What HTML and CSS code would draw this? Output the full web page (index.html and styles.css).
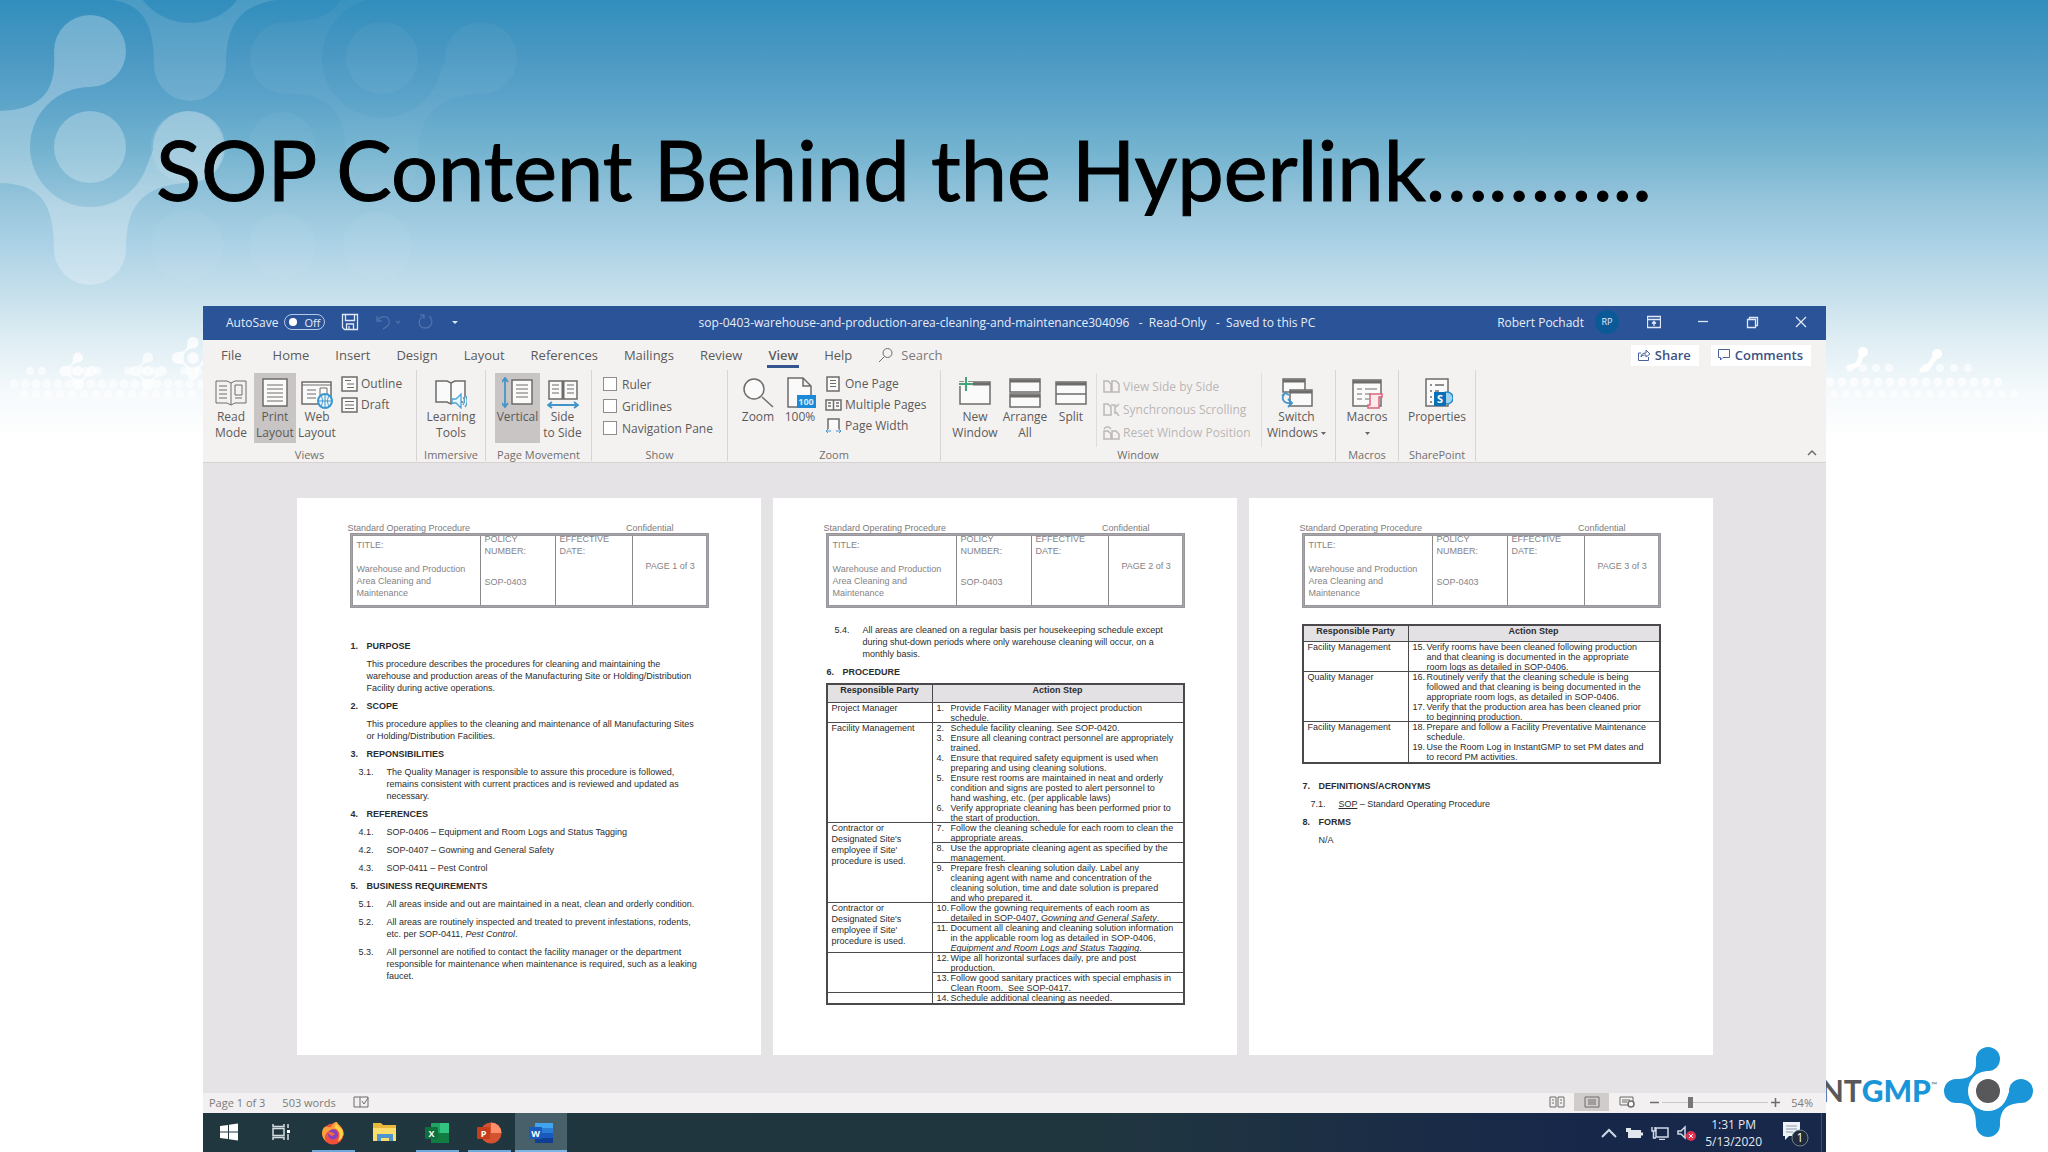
FILE: index.html
```html
<!DOCTYPE html>
<html lang="en">
<head>
<meta charset="utf-8">
<title>SOP Content Behind the Hyperlink</title>
<link rel="stylesheet" href="styles.css">
</head>
<body>
<svg width="0" height="0" class="defs" aria-hidden="true">
  <defs>
    <g id="arms">
      <circle cx="0" cy="-32" r="12"/><circle cx="-32" cy="0" r="12"/><circle cx="0" cy="34" r="12"/><circle cx="33" cy="0" r="12"/>
      <path d="M-12-31C-11-17-18-12-31-12L-31 12C-17 12-12 18-12 34L12 34C12 20 17 13 32 12L21 1L19 6L0 20L-20 0L-14-14L0-20L9-24Z"/>
    </g>
    <mask id="ring" maskUnits="userSpaceOnUse" x="-50" y="-50" width="100" height="100">
      <g fill="#fff"><use href="#arms"/></g>
      <circle r="20" fill="#000"/><circle r="12" fill="#fff"/>
    </mask>
    <g id="molecule"><rect x="-50" y="-50" width="100" height="100" fill="#fff" mask="url(#ring)"/></g>
  </defs>
</svg>
<main class="slide">
  <svg class="backdrop" viewBox="0 0 600 440" width="600" height="440" aria-hidden="true">
    <use href="#molecule" transform="translate(90 147) scale(3)" opacity=".27"/>
    <use href="#molecule" transform="translate(190 -37) scale(3)" opacity=".12"/>
    <circle cx="187" cy="147" r="36" fill="#fff" opacity=".1"/>
    <g fill="#fff" opacity=".04">
      <use href="#molecule" transform="translate(382 58) scale(3)"/>
      <circle cx="282" cy="145" r="33"/><circle cx="282" cy="246" r="33"/><circle cx="377" cy="246" r="34"/><circle cx="187" cy="246" r="36"/>
    </g>
    <g stroke="#fff" fill="none" stroke-linecap="round" opacity=".6">
      <path d="M30 371H200" stroke-width="8" stroke-dasharray="0 12 0 30 0 14"/>
      <path d="M14 384H203" stroke-width="9" stroke-dasharray="0 11"/>
      <path d="M24 394H203" stroke-width="8" stroke-dasharray="0 12"/>
    </g>
    <use href="#molecule" transform="translate(78 371) scale(.42)" opacity=".8"/>
    <use href="#molecule" transform="translate(148 371) scale(.42)" opacity=".7"/>
    <use href="#molecule" transform="translate(193 358) scale(.48)" opacity=".8"/>
  </svg>
  <svg class="backdrop backdrop-right" viewBox="0 0 222 80" width="222" height="80" aria-hidden="true">
    <g stroke="#fff" fill="none" stroke-linecap="round" opacity=".7">
      <path d="M24 28H72" stroke-width="8" stroke-dasharray="0 13"/>
      <path d="M100 28H150" stroke-width="8" stroke-dasharray="0 14"/>
      <path d="M4 42H180" stroke-width="9" stroke-dasharray="0 12"/>
      <path d="M8 54H200" stroke-width="7" stroke-dasharray="0 12"/>
    </g>
    <path d="M37 12L32 24L24 28M111 14L103 26L96 30" stroke="#fff" stroke-width="5" fill="none" stroke-linecap="round"/>
    <circle cx="37" cy="12" r="5" fill="#fff"/><circle cx="111" cy="14" r="5" fill="#fff"/>
  </svg>

  <h1 class="title">SOP Content Behind the Hyperlink………..</h1>

  <div class="brand">
    <span class="brand-name">NT<b>GMP</b><sup>™</sup></span>
    <svg viewBox="-46 -46 92 92" width="92" height="92" aria-hidden="true">
      <use href="#arms" fill="#1a96d8"/><circle r="20" fill="#fff"/><circle r="12" fill="#58585a"/>
    </svg>
  </div>

  <section class="app">
    <header class="titlebar">
      <div class="quick">
        <label class="autosave">AutoSave <span class="pill"><input type="checkbox">Off</span></label>
        <button aria-label="Save"><svg viewBox="0 0 18 18" width="18" height="18"><path d="M1.500 1.500H16.500V16.500H3.500L1.500 14.500ZM4.500 1.500V7.500H13.500V1.500M5.500 16.500V11H12.500V16.500M8 13V16" class="w"/></svg></button>
        <button class="dim" aria-label="Undo"><svg viewBox="0 0 26 18" width="26" height="18"><path d="M2 3V8H7M2 8C5 3 12 2 14 7S11 14 8 16M21 8L23 10L25 8" class="w"/></svg></button>
        <button class="dim" aria-label="Redo"><svg viewBox="0 0 18 18" width="18" height="18"><path d="M3 2H7V6M7 3C0 6 1 15 8 15S17 7 12 3" class="w"/></svg></button>
        <button aria-label="Customize"><svg viewBox="0 0 8 8" width="8" height="8"><path d="M1 3H7L4 6Z" fill="#dfe8f7"/></svg></button>
      </div>
      <div class="doc-name">sop-0403-warehouse-and-production-area-cleaning-and-maintenance304096&nbsp;&nbsp; -&nbsp; Read-Only&nbsp;&nbsp; -&nbsp; Saved to this PC</div>
      <div class="account">
        <span>Robert Pochadt</span><span class="avatar">RP</span>
        <button aria-label="Ribbon display"><svg viewBox="0 0 14 14" width="14" height="14"><path d="M.5 1.500H13.500V12.500H.5ZM.5 4.500H13.500M7 11V6.500M5 8.500L7 6.500L9 8.500" class="w"/></svg></button>
        <button aria-label="Minimize"><svg viewBox="0 0 14 14" width="14" height="14"><path d="M2 6.500H12" class="w"/></svg></button>
        <button aria-label="Restore"><svg viewBox="0 0 14 14" width="14" height="14"><path d="M2.500 4.500H10.500V12.500H2.500ZM4.500 4.500V2.500H12.500V10.500H10.500" class="w"/></svg></button>
        <button aria-label="Close"><svg viewBox="0 0 14 14" width="14" height="14"><path d="M2 2L12 12M12 2L2 12" class="w"/></svg></button>
      </div>
    </header>

    <nav class="tabs">
      <button class="file">File</button><button>Home</button><button>Insert</button><button>Design</button><button>Layout</button><button>References</button><button>Mailings</button><button>Review</button><button class="active">View</button><button>Help</button>
      <label class="search"><svg viewBox="0 0 16 16" width="16" height="16"><circle cx="9.500" cy="6" r="4.500" class="k"/><path d="M6.500 9.500L1 15" class="k"/></svg><input type="text" placeholder="Search" aria-label="Search"></label>
      <div class="share">
        <button><svg viewBox="0 0 14 14" width="14" height="14"><path d="M4 5H1.500V12.500H11.500V9M4 9C4 6 6 5 9 5V2L13 6L9 9V7C7 7 5 7 4 9Z" class="n"/></svg>Share</button>
        <button><svg viewBox="0 0 14 14" width="14" height="14"><path d="M1.500 1.500H12.500V9.500H6L3.500 12V9.500H1.500Z" class="n"/></svg>Comments</button>
      </div>
    </nav>

    <div class="ribbon">
      <div class="group views">
        <div class="tools">
          <button class="tool w46"><svg viewBox="0 0 32 32" width="32" height="32"><path d="M1 4H12L16 6L20 4H31V26H20L16 28L12 26H1ZM16 6V28M4 9H12M4 13H12M4 17H12M4 21H12M20 8H27V18H20ZM20 21H27" class="k"/></svg>Read<br>Mode</button>
          <button class="tool w42 on"><svg viewBox="0 0 32 32" width="32" height="32"><path d="M4 2H28V29H4Z" class="kf"/><path d="M8 8H24M8 12H24M8 16H24M8 20H24M8 24H24" class="k"/></svg>Print<br>Layout</button>
          <button class="tool w42"><svg viewBox="0 0 32 32" width="32" height="32"><path d="M1 5H30V27H1Z" class="kf"/><path d="M1 8H30M6 13H15M6 17H15M6 21H15M19 11H26V18H19Z" class="k"/><circle cx="24" cy="24" r="7" fill="#e8f5fc" stroke="#3a97cf" stroke-width="2"/><path d="M17 24H31M24 17V31M20 19C22 22 22 26 20 29M28 19C26 22 26 26 28 29" class="b"/></svg>Web<br>Layout</button>
          <div class="stack views-list">
            <button><svg viewBox="0 0 17 16" width="17" height="16"><path d="M1 1H16V15H1Z" class="kf"/><path d="M4 4.500H10M6 8H13M6 11.500H13" class="k"/></svg>Outline</button>
            <button><svg viewBox="0 0 17 16" width="17" height="16"><path d="M1 1H16V15H1Z" class="kf"/><path d="M4 4.500H13M4 8H13M4 11.500H13" class="k"/></svg>Draft</button>
          </div>
        </div>
        <div class="group-name">Views</div>
      </div>
      <div class="group immersive">
        <div class="tools center">
          <button class="tool w50"><svg viewBox="0 0 32 32" width="32" height="32"><path d="M1 4H12L16 6L20 4H30V25H19L16 27L12 25H1ZM16 6V26" class="kf"/><path d="M17 22H21L26 17V31L21 26H17ZM28 20C30 23 30 25 28 28M30 18C33 22 33 26 30 30" class="bf"/></svg>Learning<br>Tools</button>
        </div>
        <div class="group-name">Immersive</div>
      </div>
      <div class="group movement">
        <div class="tools">
          <button class="tool single w45 on"><svg viewBox="0 0 32 32" width="32" height="32"><path d="M3 1V30M0 5L3 1L6 5M0 26L3 30L6 26" class="b2"/><path d="M10 3H30V27H10Z" class="kf"/><path d="M14 8H26M14 12H26M14 16H26M14 20H26" class="k"/></svg>Vertical</button>
          <button class="tool w45"><svg viewBox="0 0 32 32" width="32" height="32"><path d="M2 4H30V22H2Z" class="kf"/><path d="M16 4V22" class="k3"/><path d="M5 8H12M5 12H12M5 16H12M20 8H27M20 12H27M20 16H27" class="k"/><path d="M1 28H31M5 25L1 28L5 31M27 25L31 28L27 31" class="b2"/></svg>Side<br>to Side</button>
        </div>
        <div class="group-name">Page Movement</div>
      </div>
      <div class="group show">
        <div class="tools checks">
          <label><input type="checkbox">Ruler</label><label><input type="checkbox">Gridlines</label><label><input type="checkbox">Navigation Pane</label>
        </div>
        <div class="group-name">Show</div>
      </div>
      <div class="group zoom">
        <div class="tools">
          <button class="tool single w42"><svg viewBox="0 0 32 32" width="32" height="32"><circle cx="12" cy="12" r="10" class="kf"/><path d="M20 20L31 30" class="k2"/></svg>Zoom</button>
          <button class="tool single w42"><svg viewBox="0 0 32 32" width="32" height="32"><path d="M4 1H19L27 9V30H4ZM19 1V9H27" class="kf"/><rect x="13" y="18" width="19" height="13" fill="#1c8ad6"/><text x="22" y="28" text-anchor="middle" class="hundred">100</text></svg>100%</button>
          <div class="stack zoom-list">
            <button><svg viewBox="0 0 17 16" width="17" height="16"><path d="M2 1H14V15H2Z" class="kf"/><path d="M5 4.500H11M5 7.500H11M5 10.500H11" class="k"/></svg>One Page</button>
            <button><svg viewBox="0 0 17 16" width="17" height="16"><path d="M1 3H16V13H1Z" class="kf"/><path d="M8.500 3V13M3 6H6M3 9H6M11 6H14M11 9H14" class="k2"/></svg>Multiple Pages</button>
            <button><svg viewBox="0 0 17 16" width="17" height="16"><path d="M3 11V1H14V11" class="kf"/><path d="M1 13H6M11 13H16M3 11L1 13L3 15M14 11L16 13L14 15" class="b"/></svg>Page Width</button>
          </div>
        </div>
        <div class="group-name">Zoom</div>
      </div>
      <div class="group window">
        <div class="tools">
          <button class="tool w50"><svg viewBox="0 0 32 32" width="32" height="32"><path d="M1 5H31V27H1Z" class="kf"/><path d="M10 7H31" class="k3"/><path d="M7 0V14M0 7H14" stroke="#f4f2f1" stroke-width="4"/><path d="M7 0V14M0 7H14" stroke="#45a479" stroke-width="2"/></svg>New<br>Window</button>
          <button class="tool w50"><svg viewBox="0 0 32 32" width="32" height="32"><path d="M1 2H31V15H1ZM1 17H31V30H1Z" class="kf"/><path d="M1 4H31M1 19H31" class="k3"/></svg>Arrange<br>All</button>
          <button class="tool single w42"><svg viewBox="0 0 32 32" width="32" height="32"><path d="M1 5H31V27H1ZM1 17H31" class="kf"/><path d="M1 7H31" class="k3"/></svg>Split</button>
          <div class="stack disabled">
            <button disabled><svg viewBox="0 0 17 16" width="17" height="16"><path d="M1 2H5L8 5V13H1ZM9 2H13L16 5V13H9Z" class="g"/></svg>View Side by Side</button>
            <button disabled><svg viewBox="0 0 17 16" width="17" height="16"><path d="M1 2H5L8 5V13H1ZM8 3H12V12M16 2L13 5M16 14L13 10" class="g"/></svg>Synchronous Scrolling</button>
            <button disabled><svg viewBox="0 0 17 16" width="17" height="16"><path d="M1 6H5L8 9V14H1ZM9 6H13L16 9V14H9ZM1 4C3 1 6 1 8 4" class="g"/></svg>Reset Window Position</button>
          </div>
          <button class="tool w66"><svg viewBox="0 0 32 32" width="32" height="32"><path d="M2 2H24V15H2Z" class="kf"/><path d="M2 4H24" class="k3"/><path d="M9 13H31V29H9Z" class="kf"/><path d="M9 15H31" class="k3"/><path d="M4 16C-1 22 3 27 10 26M7 22L11 26L7 30M1 19L4 16L8 18" class="b2"/></svg>Switch<br>Windows <svg class="caret" viewBox="0 0 5 3" width="5" height="3"><path d="M0 0H5L2.500 3Z" fill="#666"/></svg></button>
        </div>
        <div class="group-name">Window</div>
      </div>
      <div class="group macros">
        <div class="tools center">
          <button class="tool w50"><svg viewBox="0 0 32 32" width="32" height="32"><path d="M2 3H30V29H2Z" class="kf"/><path d="M2 5H30" class="k3"/><path d="M6 12H11M14 12H26M6 17H11M14 17H20M6 22H11M14 22H18" class="k"/><path d="M19 17H31V20H28V31H17V28H19Z" fill="#fbe9ec" stroke="#d9667a" stroke-width="1.500"/></svg>Macros<br><svg class="caret" viewBox="0 0 5 3" width="5" height="3"><path d="M0 0H5L2.500 3Z" fill="#666"/></svg></button>
        </div>
        <div class="group-name">Macros</div>
      </div>
      <div class="group sharepoint">
        <div class="tools center">
          <button class="tool single w66"><svg viewBox="0 0 32 32" width="32" height="32"><path d="M5 2H27V29H5Z" class="kf"/><path d="M9 8H11M14 8H23M9 14H11M14 14H18M9 20H11M9 25H11" class="k2"/><circle cx="26" cy="21" r="6" fill="#9cd2f2" stroke="#2a8ccc" stroke-width="1.500"/><rect x="13" y="15" width="12" height="14" fill="#0b6fb8"/><text x="19" y="26" text-anchor="middle" class="sp">S</text></svg>Properties</button>
        </div>
        <div class="group-name">SharePoint</div>
      </div>
      <button class="collapse" aria-label="Collapse ribbon"><svg viewBox="0 0 10 8" width="10" height="8"><path d="M1 6L5 2L9 6" class="k2"/></svg></button>
    </div>

    <div class="canvas">
      <article class="page">
        <div class="running"><span>Standard Operating Procedure</span><span>Confidential</span></div>
        <table class="head"><tr><td class="c1">TITLE:<p>Warehouse and Production<br>Area Cleaning and<br>Maintenance</p></td><td class="c2"><div>POLICY<br>NUMBER:</div><p>SOP-0403</p></td><td class="c3"><div>EFFECTIVE<br>DATE:</div></td><td class="c4">PAGE 1 of 3</td></tr></table>
        <div class="body first">
          <h2><i>1.</i>PURPOSE</h2>
          <p>This procedure describes the procedures for cleaning and maintaining the<br>warehouse and production areas of the Manufacturing Site or Holding/Distribution<br>Facility during active operations.</p>
          <h2><i>2.</i>SCOPE</h2>
          <p>This procedure applies to the cleaning and maintenance of all Manufacturing Sites<br>or Holding/Distribution Facilities.</p>
          <h2><i>3.</i>REPONSIBILITIES</h2>
          <div class="item"><span>3.1.</span><span>The Quality Manager is responsible to assure this procedure is followed,<br>remains consistent with current practices and is reviewed and updated as<br>necessary.</span></div>
          <h2><i>4.</i>REFERENCES</h2>
          <div class="item"><span>4.1.</span><span>SOP-0406 – Equipment and Room Logs and Status Tagging</span></div>
          <div class="item"><span>4.2.</span><span>SOP-0407 – Gowning and General Safety</span></div>
          <div class="item"><span>4.3.</span><span>SOP-0411 – Pest Control</span></div>
          <h2><i>5.</i>BUSINESS REQUIREMENTS</h2>
          <div class="item"><span>5.1.</span><span>All areas inside and out are maintained in a neat, clean and orderly condition.</span></div>
          <div class="item"><span>5.2.</span><span>All areas are routinely inspected and treated to prevent infestations, rodents,<br>etc. per SOP-0411, <em>Pest Control</em>.</span></div>
          <div class="item"><span>5.3.</span><span>All personnel are notified to contact the facility manager or the department<br>responsible for maintenance when maintenance is required, such as a leaking<br>faucet.</span></div>
        </div>
      </article>

      <article class="page">
        <div class="running"><span>Standard Operating Procedure</span><span>Confidential</span></div>
        <table class="head"><tr><td class="c1">TITLE:<p>Warehouse and Production<br>Area Cleaning and<br>Maintenance</p></td><td class="c2"><div>POLICY<br>NUMBER:</div><p>SOP-0403</p></td><td class="c3"><div>EFFECTIVE<br>DATE:</div></td><td class="c4">PAGE 2 of 3</td></tr></table>
        <div class="body">
          <div class="item"><span>5.4.</span><span>All areas are cleaned on a regular basis per housekeeping schedule except<br>during shut-down periods where only warehouse cleaning will occur, on a<br>monthly basis.</span></div>
          <h2><i>6.</i>PROCEDURE</h2>
        </div>
        <table class="steps">
          <thead><tr><th>Responsible Party</th><th>Action Step</th></tr></thead>
          <tbody>
          <tr><td>Project Manager</td><td><ol><li><i>1.</i><span>Provide Facility Manager with project production<br>schedule.</span></li></ol></td></tr>
          <tr><td>Facility Management</td><td><ol><li><i>2.</i><span>Schedule facility cleaning. See SOP-0420.</span></li><li><i>3.</i><span>Ensure all cleaning contract personnel are appropriately<br>trained.</span></li><li><i>4.</i><span>Ensure that required safety equipment is used when<br>preparing and using cleaning solutions.</span></li><li><i>5.</i><span>Ensure rest rooms are maintained in neat and orderly<br>condition and signs are posted to alert personnel to<br>hand washing, etc. (per applicable laws)</span></li><li><i>6.</i><span>Verify appropriate cleaning has been performed prior to<br>the start of production.</span></li></ol></td></tr>
          <tr><td rowspan="3" class="loose">Contractor or<br>Designated Site's<br>employee if Site'<br>procedure is used.</td><td><ol><li><i>7.</i><span>Follow the cleaning schedule for each room to clean the<br>appropriate areas.</span></li></ol></td></tr>
          <tr><td><ol><li><i>8.</i><span>Use the appropriate cleaning agent as specified by the<br>management.</span></li></ol></td></tr>
          <tr><td><ol><li><i>9.</i><span>Prepare fresh cleaning solution daily. Label any<br>cleaning agent with name and concentration of the<br>cleaning solution, time and date solution is prepared<br>and who prepared it.</span></li></ol></td></tr>
          <tr><td rowspan="2" class="loose">Contractor or<br>Designated Site's<br>employee if Site'<br>procedure is used.</td><td><ol><li><i>10.</i><span>Follow the gowning requirements of each room as<br>detailed in SOP-0407, <em>Gowning and General Safety</em>.</span></li></ol></td></tr>
          <tr><td><ol><li><i>11.</i><span>Document all cleaning and cleaning solution information<br>in the applicable room log as detailed in SOP-0406,<br><em>Equipment and Room Logs and Status Tagging</em>.</span></li></ol></td></tr>
          <tr><td rowspan="2"></td><td><ol><li><i>12.</i><span>Wipe all horizontal surfaces daily, pre and post<br>production.</span></li></ol></td></tr>
          <tr><td><ol><li><i>13.</i><span>Follow good sanitary practices with special emphasis in<br>Clean Room.&nbsp; See SOP-0417.</span></li></ol></td></tr>
          <tr><td></td><td><ol><li><i>14.</i><span>Schedule additional cleaning as needed.</span></li></ol></td></tr>
          </tbody>
        </table>
      </article>

      <article class="page">
        <div class="running"><span>Standard Operating Procedure</span><span>Confidential</span></div>
        <table class="head"><tr><td class="c1">TITLE:<p>Warehouse and Production<br>Area Cleaning and<br>Maintenance</p></td><td class="c2"><div>POLICY<br>NUMBER:</div><p>SOP-0403</p></td><td class="c3"><div>EFFECTIVE<br>DATE:</div></td><td class="c4">PAGE 3 of 3</td></tr></table>
        <table class="steps follow">
          <thead><tr><th>Responsible Party</th><th>Action Step</th></tr></thead>
          <tbody>
          <tr><td>Facility Management</td><td><ol><li><i>15.</i><span>Verify rooms have been cleaned following production<br>and that cleaning is documented in the appropriate<br>room logs as detailed in SOP-0406.</span></li></ol></td></tr>
          <tr><td>Quality Manager</td><td><ol><li><i>16.</i><span>Routinely verify that the cleaning schedule is being<br>followed and that cleaning is being documented in the<br>appropriate room logs, as detailed in SOP-0406.</span></li><li><i>17.</i><span>Verify that the production area has been cleaned prior<br>to beginning production.</span></li></ol></td></tr>
          <tr><td>Facility Management</td><td><ol><li><i>18.</i><span>Prepare and follow a Facility Preventative Maintenance<br>schedule.</span></li><li><i>19.</i><span>Use the Room Log in InstantGMP to set PM dates and<br>to record PM activities.</span></li></ol></td></tr>
          </tbody>
        </table>
        <div class="body">
          <h2><i>7.</i>DEFINITIONS/ACRONYMS</h2>
          <div class="item"><span>7.1.</span><span><u>SOP</u> – Standard Operating Procedure</span></div>
          <h2><i>8.</i>FORMS</h2>
          <p>N/A</p>
        </div>
      </article>
    </div>

    <footer class="status">
      <span>Page 1 of 3</span><span>503 words</span>
      <svg viewBox="0 0 16 12" width="16" height="12"><path d="M1 1H7V11H1ZM7 1H15V11H7M9 5L11 8L15 2" class="k"/></svg>
      <div class="modes">
        <button aria-label="Read mode"><svg viewBox="0 0 16 12" width="16" height="12"><path d="M1 1H7V11H1ZM9 1H15V11H9ZM3 4H5M3 7H5M11 4H13M11 7H13" class="k"/></svg></button>
        <button class="on" aria-label="Print layout"><svg viewBox="0 0 16 12" width="16" height="12"><path d="M1 1H15V11H1ZM4 4H12M4 6H12M4 8H12" class="k"/></svg></button>
        <button aria-label="Web layout"><svg viewBox="0 0 16 12" width="16" height="12"><path d="M1 1H14V9H1ZM3 4H11M3 6H8" class="k"/><circle cx="12" cy="8" r="3" class="kf"/></svg></button>
      </div>
      <button class="sign" aria-label="Zoom out"><svg viewBox="0 0 9 9" width="9" height="9"><path d="M0 4.500H9" class="k2"/></svg></button>
      <input type="range" min="0" max="100" value="25" aria-label="Zoom">
      <button class="sign" aria-label="Zoom in"><svg viewBox="0 0 9 9" width="9" height="9"><path d="M0 4.500H9M4.500 0V9" class="k2"/></svg></button>
      <span class="percent">54%</span>
    </footer>

    <footer class="taskbar">
      <button aria-label="Start"><svg viewBox="0 0 18 18" width="18" height="18"><path d="M0 3L8 2V8.500H0ZM9 1.800L18 .5V8.500H9ZM0 9.500H8V16L0 15ZM9 9.500H18V17.500L9 16.200Z" fill="#fff"/></svg></button>
      <button aria-label="Task view"><svg viewBox="0 0 18 18" width="18" height="18"><path d="M1 1V3.500H12V1M1 17V14.500H12V17M1 5.500H12V12.500H1ZM16 1V5M16 11V17" fill="none" stroke="#d5dde0" stroke-width="1.500"/><rect x="15" y="7" width="3" height="3" fill="#fff"/></svg></button>
      <button class="open" aria-label="Firefox"><svg viewBox="0 0 26 24" width="26" height="24"><circle cx="13" cy="13" r="10.500" fill="#f2503c"/><path d="M3 8C5 4 8 7 11 6C14 0 16 1 17 1C18 4 25 7 23.500 15C21 8 16 8 13 8C6 10 3 16 6 20C2 17 1 12 3 8Z" fill="#f9a13a"/><path d="M16 1C16 5 24 7 23 14C22 18 19 20 18 20C21 14 19 9 15 7Z" fill="#fcd34a"/><circle cx="13" cy="13.500" r="5" fill="#8142c6"/><path d="M8 11C11 10 13 12 15 13C13 16 9 15 8 11Z" fill="#f76a38"/></svg></button>
      <button aria-label="File Explorer"><svg viewBox="0 0 26 22" width="26" height="22"><path d="M1 2H9L11 4H24V20H1Z" fill="#e9b93c"/><path d="M1 7H24V20H1Z" fill="#fbdd6e"/><path d="M5 20V13H21V20H17V17H9V20Z" fill="#4f93cf"/></svg></button>
      <button class="open" aria-label="Excel"><svg viewBox="0 0 26 22" width="26" height="22"><rect x="7" y="1" width="18" height="20" rx="1" fill="#21a366"/><path d="M16 1H24C25 1 25 1 25 2V11H16Z" fill="#33c481"/><path d="M7 11H25V20L24 21H7Z" fill="#107c41"/><rect x="1" y="5" width="13" height="12" rx="1" fill="#0e703b"/><text x="7.500" y="15" text-anchor="middle" class="glyph">X</text></svg></button>
      <button class="open" aria-label="PowerPoint"><svg viewBox="0 0 26 22" width="26" height="22"><circle cx="15" cy="11" r="10.500" fill="#d35230"/><path d="M15 .5A10.500 10.500 0 0 1 25.500 11H15Z" fill="#ff8f6b"/><rect x="1" y="5" width="13" height="12" rx="1" fill="#c43e1c"/><text x="7.500" y="15" text-anchor="middle" class="glyph">P</text></svg></button>
      <button class="open current" aria-label="Word"><svg viewBox="0 0 26 22" width="26" height="22"><rect x="7" y="1" width="18" height="20" rx="1" fill="#2b7cd3"/><path d="M7 1H25V6H7Z" fill="#41a5ee"/><path d="M7 11H25V16H7Z" fill="#185abd"/><path d="M7 16H25V21H7Z" fill="#103f91"/><rect x="1" y="5" width="13" height="12" rx="1" fill="#185abd"/><text x="7.500" y="15" text-anchor="middle" class="glyph">W</text></svg></button>
      <div class="tray">
        <svg viewBox="0 0 16 12" width="16" height="12"><path d="M1 10L8 3L15 10" fill="none" stroke="#cfd8e6" stroke-width="2"/></svg>
        <svg viewBox="0 0 18 14" width="18" height="14"><path d="M3 4H16V12H3Z" fill="#dfe6ee"/><path d="M16 6.500H18V9.500H16ZM1 2H6V6H1Z" fill="#dfe6ee"/></svg>
        <svg viewBox="0 0 18 14" width="18" height="14"><path d="M5 2H17V11H5ZM8 13.500H14M1 1V5H4V1M2.500 5V12H5" fill="none" stroke="#cfd8e6" stroke-width="1.500"/></svg>
        <svg viewBox="0 0 20 16" width="20" height="16"><path d="M1 6H4L8 2V13L4 9H1Z" fill="none" stroke="#cfd8e6" stroke-width="1.500"/><circle cx="14" cy="11" r="5" fill="#e2304f"/><path d="M12 9L16 13M16 9L12 13" stroke="#fff"/></svg>
        <time>1:31 PM<br>5/13/2020</time>
        <svg viewBox="0 0 28 28" width="28" height="28"><path d="M1 3H18V17H7L3 21V17H1Z" fill="#eef2f7"/><path d="M4 7H15M4 10H15M4 13H11" stroke="#8b98ad"/><circle cx="18" cy="19" r="8" fill="#1d2b3c" stroke="#77828c"/><text x="18" y="23" text-anchor="middle" class="count">1</text></svg>
      </div>
    </footer>
  </section>
</main>
</body>
</html>
```
FILE: styles.css
```css
* { box-sizing: border-box; }
body { margin: 0; font-family: "Open Sans", "Noto Sans", sans-serif; font-size: 12px; color: #5c5a59; }
button, input { font: inherit; color: inherit; }
button { border: 0; padding: 0; margin: 0; background: none; white-space: nowrap; }
svg { flex: none; }
.defs { position: absolute; }

.slide {
  position: relative; overflow: hidden; min-height: 100vh; padding: 0 222px 0 203px;
  background: linear-gradient(#318ebd 0, #4897c2 50px, #5aa2c9 95px, #73b3cf 150px, #98c6dc 205px, #acd2e6 245px, #c9e1ec 300px, #dfeef4 340px, #f6fafc 395px, #fff 440px);
}
.backdrop { position: absolute; left: 0; top: 0; }
.backdrop-right { left: auto; right: 0; top: 340px; }
.title {
  position: relative; margin: 0 0 0 -47px; height: 306px; padding-top: 115px;
  font: 400 83px/108px Lato, "Open Sans", sans-serif; color: #000; white-space: nowrap;
  -webkit-text-stroke: 1px #000;
}
.brand { position: absolute; right: 14px; bottom: 15px; display: flex; align-items: center; }
.brand-name { font: 700 30px/36px Lato, sans-serif; color: #58585a; margin: 0 5px 2px 0; }
.brand-name b { color: #1a96d8; }
.brand-name sup { font-size: 8px; line-height: 8px; vertical-align: 14px; color: #888; }

.app { position: relative; background: #f4f2f1; }
.k, .kf, .k2, .k3, .w, .n, .g, .b, .b2, .bf { fill: none; stroke: #6e6c6b; stroke-width: 1; }
.kf { fill: #fafafa; stroke-width: 1.500; }
.k2 { stroke-width: 1.500; }
.k3 { stroke-width: 3; }
.w { stroke: #dfe8f7; stroke-width: 1.300; }
.n { stroke: #4a629b; }
.g { stroke: #bbb8b7; stroke-width: 1.500; }
.b, .b2 { stroke: #4295c9; }
.b2 { stroke-width: 1.800; }
.bf { fill: #eaf6fd; stroke: #4aa3d4; stroke-width: 1.300; }

.titlebar { display: grid; grid-template-columns: 1fr auto 1fr; align-items: center; height: 34px; padding: 0 18px 2px 23px; background: #2a5398; color: #e6edf9; }
.quick, .account { display: flex; align-items: center; }
.quick { gap: 16px; }
.quick button, .account button { display: flex; }
.autosave { display: flex; align-items: center; gap: 6px; }
.pill { display: flex; align-items: center; gap: 7px; width: 41px; height: 16px; padding-left: 4px; border: 1px solid #b8c9e8; border-radius: 8px; font-size: 11px; }
.pill input { appearance: none; width: 8px; height: 8px; margin: 0; border-radius: 50%; background: #fff; }
.dim { opacity: .2; }
.doc-name { margin-right: 20px; white-space: nowrap; }
.account { justify-content: flex-end; gap: 35px; }
.avatar { margin: 0 -7px 0 -24px; width: 24px; height: 24px; border-radius: 50%; background: #0b5a97; font-size: 9px; line-height: 24px; text-align: center; }

.tabs { display: flex; align-items: center; height: 30px; padding-left: 5px; font-size: 13px; }
.tabs > button { height: 30px; padding: 0 13px; }
.tabs .file { margin-right: 5px; }
.tabs .active { position: relative; font-weight: 600; }
.tabs .active::after { content: ""; position: absolute; left: 12px; right: 12px; bottom: 2px; height: 3px; background: #35558f; }
.search { display: flex; align-items: center; gap: 7px; margin-left: 13px; }
.search input { width: 120px; border: 0; padding: 0; background: none; }
.search input::placeholder { color: #7c7a79; opacity: 1; }
.share { display: flex; gap: 12px; margin: 0 15px 0 auto; font-weight: 600; color: #3c5186; }
.share button { display: flex; align-items: center; gap: 4px; height: 21px; padding: 0 8px 0 6px; background: #fff; }

.ribbon { display: flex; height: 93px; padding-bottom: 1px; border-bottom: 1px solid #d6d3d2; }
.group { display: flex; flex-direction: column; border-right: 1px solid #d8d5d4; }
.tools { display: flex; height: 77px; padding-top: 3px; }
.center { justify-content: center; }
.group-name { height: 14px; font-size: 11px; line-height: 16px; text-align: center; white-space: nowrap; color: #716f6e; }
.views { width: 214px; } .views .tools { padding-left: 5px; }
.immersive { width: 69px; }
.movement { width: 106px; } .movement .tools { padding-left: 9px; }
.show { width: 136px; }
.zoom { width: 213px; } .zoom .tools { padding-left: 9px; }
.window { width: 395px; } .window .tools { padding-left: 9px; }
.macros { width: 63px; }
.sharepoint { width: 77px; }
.tool { display: block; flex: none; height: 70px; padding-top: 2px; line-height: 16px; text-align: center; }
.tool.single { padding-bottom: 16px; }
.tool > svg:first-child { display: block; margin: 0 auto; }
.tool .caret { display: inline-block; vertical-align: middle; }
.w42 { width: 42px; } .w45 { width: 45px; } .w46 { width: 46px; } .w50 { width: 50px; } .w66 { width: 66px; }
.tool.on { background: #c8c5c4; }
.stack { display: flex; flex-direction: column; }
.stack button { display: flex; align-items: center; gap: 3px; height: 21px; }
.views-list { padding-left: 3px; }
.zoom-list { padding-left: 4px; }
.disabled { padding: 2px 10px 0 6px; margin: 0 2px 0 4px; border: 1px solid #dfdcdb; border-width: 0 1px; color: #b9b6b5; }
.disabled button { height: 23px; color: #b9b6b5; }
.checks { flex-direction: column; padding-left: 11px; }
.checks label { display: flex; align-items: center; gap: 5px; height: 22px; white-space: nowrap; }
.checks input { appearance: none; width: 14px; height: 14px; margin: 0; border: 1px solid #8f8d8c; background: #fff; }
.hundred { font: 700 9px "Open Sans", sans-serif; fill: #d5ecfb; }
.sp { font: 700 11px "Open Sans", sans-serif; fill: #fff; }
.collapse { margin: auto 9px 0 auto; }

.canvas { display: flex; justify-content: center; gap: 12px; padding: 35px 20px 38px 0; background: #e6e3e6; }
.page { flex: 0 0 464px; min-height: 557px; padding: 24px 52px 0 53px; background: #fff; font: 9px/12px "Liberation Sans", Arial, sans-serif; color: #2c2c2e; white-space: nowrap; }
.page i { font-style: normal; }
.running { display: flex; justify-content: space-between; padding-right: 35px; height: 11px; margin-left: -2px; color: #7c7a7d; }
.head { width: 359px; height: 75px; table-layout: fixed; border-collapse: collapse; border: 3px double #98969a; outline: 1px solid #a8a6aa; outline-offset: -2px; color: #858386; }
.head td { padding: 0 0 0 4px; border-right: 1px solid #8b898c; vertical-align: top; }
.head div { margin-top: -3px; }
.head p { margin: 12px 0 0; }
.head .c1 { width: 129px; padding-top: 3px; }
.head .c2 { width: 75px; }
.head .c2 p { margin-top: 19px; }
.head .c3 { width: 77px; }
.head .c4 { padding-left: 13px; padding-top: 24px; }
.body { padding-top: 16px; }
.body.first { padding-top: 32px; }
.body > * { margin: 0 0 6px; }
.body h2 { display: flex; font-size: 9px; line-height: 12px; }
.body h2:last-child { margin-bottom: 5px; }
.body h2 i { width: 17px; padding-left: 1px; }
.body p { padding-left: 17px; }
.item { display: grid; grid-template-columns: 28px 1fr; padding-left: 9px; }

.steps { width: 359px; border-spacing: 0; border: 2px solid #4b494c; line-height: 10px; }
.steps th { height: 18px; padding: 0; background: #e3e1e4; vertical-align: top; }
.steps th:first-child { width: 104px; }
.steps td { padding: 0 0 0 4px; vertical-align: top; box-shadow: 0 -1px 0 #4b494c; }
.steps tr > :nth-last-child(1) { border-left: 1px solid #4b494c; }
.steps .loose { line-height: 11px; }
.steps ol { margin: 0; padding: 0; list-style: none; }
.steps li { display: grid; grid-template-columns: 14px 1fr; }
.follow { margin-top: 16px; }
.follow th { height: 16px; }

.status { display: flex; align-items: center; height: 20px; padding: 0 13px 2px 6px; font-size: 11px; color: #7d7b7a; background: #f2f0f0; }
.status > span + span, .status > span + svg { margin-left: 17px; }
.modes { display: flex; margin-left: auto; margin-right: 6px; }
.modes button { display: flex; align-items: center; justify-content: center; width: 35px; height: 18px; }
.modes .on { background: #cfcccb; }
.sign { display: flex; }
.status input { appearance: none; width: 106px; height: 12px; margin: 0 3px; background: linear-gradient(#c9c6c5, #c9c6c5) center / 100% 1px no-repeat; }
.status input::-webkit-slider-thumb { appearance: none; width: 5px; height: 11px; background: #777; }
.status .percent { margin-left: 11px; }

.taskbar { display: flex; height: 39px; background: linear-gradient(90deg, #21373f 0, #20363f 55%, #17274a 85%, #17284b 100%); }
.taskbar > button { display: flex; align-items: center; justify-content: center; width: 52px; height: 39px; border-bottom: 2px solid transparent; }
.taskbar .open { background: linear-gradient(#6fa9dc, #6fa9dc) bottom / 43px 2px no-repeat; border: 0; }
.taskbar .current { background: linear-gradient(#7db6e6, #7db6e6) bottom / 100% 2px no-repeat, #47606a; }
.glyph { font: 700 9px "Open Sans", sans-serif; fill: #fff; }
.tray { display: flex; align-items: center; gap: 8px; margin-left: auto; padding-right: 11px; border-right: 1px solid #3e4d68; margin-right: 4px; color: #e4e9f0; }
.tray time { margin: 0 12px 0 0; line-height: 17px; text-align: center; }
.count { font: 12px "Open Sans", sans-serif; fill: #fff; }
```
